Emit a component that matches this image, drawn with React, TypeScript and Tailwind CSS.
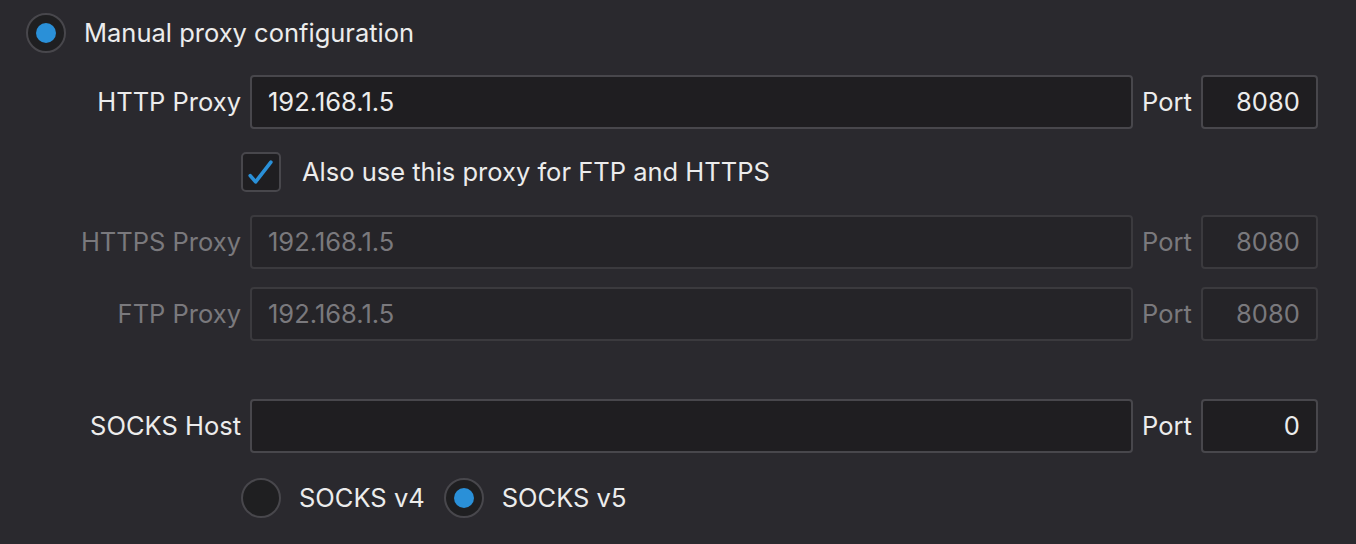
import React from "react";

const font = { fontFamily: "Inter, 'Noto Sans', sans-serif" };

function Radio({ checked }: { checked: boolean }) {
  return (
    <div className="w-[40px] h-[40px] rounded-full border-2 border-[#48474c] bg-[#1f1f21] flex items-center justify-center shrink-0">
      {checked && <div className="w-[20px] h-[20px] rounded-full bg-[#2a90d8]" />}
    </div>
  );
}

function Row({
  label,
  value,
  port,
  disabled,
  className,
}: {
  label: string;
  value: string;
  port: string;
  disabled?: boolean;
  className?: string;
}) {
  const text = disabled ? "text-[#7a797d]" : "text-[#ececec]";
  const box = disabled
    ? "bg-[#252428] border-[#3b3a3e]"
    : "bg-[#1f1e21] border-[#48474c]";
  return (
    <div className={`flex items-center h-[54px] ${className ?? ""}`}>
      <div className={`w-[241px] text-right ${text}`}>{label}</div>
      <div
        className={`ml-[9px] w-[883px] h-[54px] rounded-[4px] border-2 ${box} flex items-center pl-[16px] ${text}`}
      >
        {value}
      </div>
      <div className={`ml-[9px] ${text}`}>Port</div>
      <div
        className={`ml-[9px] w-[117px] h-[54px] rounded-[4px] border-2 ${box} flex items-center justify-end pr-[16px] ${text}`}
      >
        {port}
      </div>
    </div>
  );
}

export default function App() {
  return (
    <div
      className="w-[1356px] h-[544px] bg-[#2a292e] text-[25.5px] leading-[1.3] text-[#ececec] pt-[13px] overflow-hidden"
      style={font}
    >
      <div className="flex items-center pl-[26px] h-[40px]">
        <Radio checked />
        <span className="ml-[18px]">Manual proxy configuration</span>
      </div>
      <Row label="HTTP Proxy" value="192.168.1.5" port="8080" className="mt-[22px]" />
      <div className="flex items-center pl-[241px] mt-[23px] h-[40px]">
        <div className="w-[40px] h-[40px] rounded-[5px] border-2 border-[#48474c] bg-[#1f1e21] flex items-center justify-center shrink-0">
          <svg width="40" height="40" viewBox="0 0 40 40">
            <path
              d="M8 24 L14 31 L31 9"
              fill="none"
              stroke="#2a90d8"
              strokeWidth="4"
              strokeLinecap="round"
              strokeLinejoin="round"
            />
          </svg>
        </div>
        <span className="ml-[21px]">Also use this proxy for FTP and HTTPS</span>
      </div>
      <Row label="HTTPS Proxy" value="192.168.1.5" port="8080" disabled className="mt-[23px]" />
      <Row label="FTP Proxy" value="192.168.1.5" port="8080" disabled className="mt-[18px]" />
      <Row label="SOCKS Host" value="" port="0" className="mt-[58px]" />
      <div className="flex items-center pl-[241px] mt-[25px] h-[40px]">
        <Radio checked={false} />
        <span className="ml-[18px]">SOCKS v4</span>
        <div className="ml-[19px]">
          <Radio checked />
        </div>
        <span className="ml-[18px]">SOCKS v5</span>
      </div>
    </div>
  );
}
